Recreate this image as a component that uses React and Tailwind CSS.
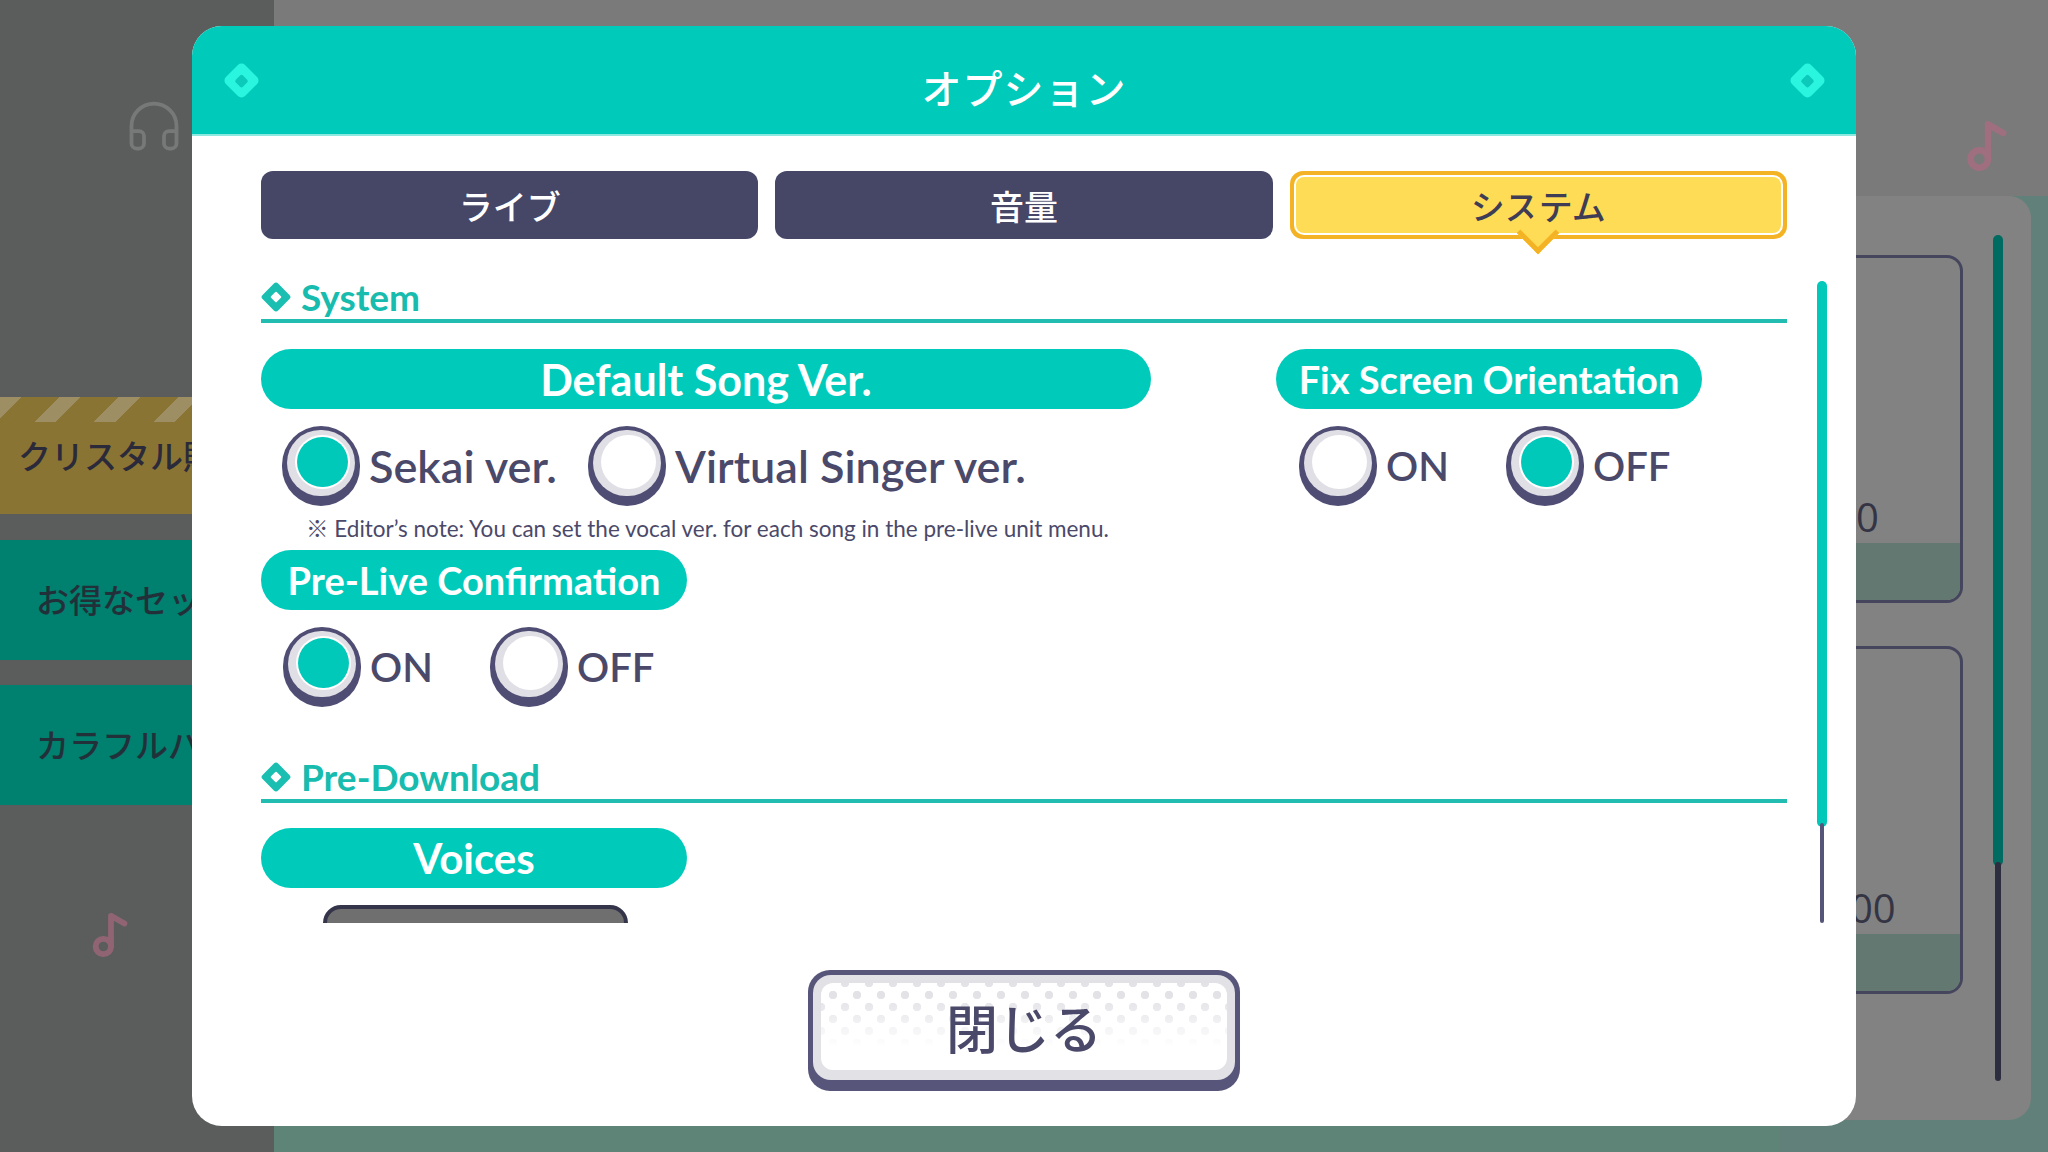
import React from 'react';
import { Music2, Headphones } from 'lucide-react';

const latin = "font-['Lato','Noto_Sans_CJK_JP',sans-serif]";
const jp = "font-['Noto_Sans_CJK_JP',sans-serif]";

const Radio = ({ on }) => (
    <div className="w-[78px] h-[80px] shrink-0 rounded-full bg-[#4f4d73] pt-[4px] px-[5px] pb-[10px]">
        <div className="w-full h-full rounded-full bg-[#dfdfe5] pt-[5px] pr-[5px] pb-[7px] pl-[8px]">
            {on ? (
                <div className="w-full h-full rounded-full bg-white p-[2px]">
                    <div className="w-full h-full rounded-full bg-[#00c9ba]" />
                </div>
            ) : (
                <div className="w-full h-full rounded-full bg-white" />
            )}
        </div>
    </div>
);

const RadioOption = ({ on, label, w = '', size = 'text-[40px]' }) => (
    <div className={`flex items-center gap-[9px] shrink-0 ${w}`}>
        <Radio on={on} />
        <span className={`${size} font-semibold leading-none text-[#4b4969] whitespace-nowrap`}>{label}</span>
    </div>
);

const Pill = ({ className = '', children }) => (
    <div className={`h-[60px] shrink-0 rounded-full bg-[#00cbbb] flex items-center justify-center text-white font-bold leading-none whitespace-nowrap ${className}`}>
        {children}
    </div>
);

const SectionHeader = ({ title }) => (
    <div className="h-[46px] flex items-center gap-[10px] border-b-4 border-[#22bdb0] pb-[2px]">
        <div className="w-[30px] h-[30px] flex items-center justify-center">
            <div className="w-[22px] h-[22px] rotate-45 rounded-[3px] bg-[#1bbfb1] flex items-center justify-center">
                <div className="w-[8px] h-[8px] bg-white rounded-[1px]" />
            </div>
        </div>
        <span className="text-[37px] font-bold leading-[40px] text-[#17bcae]">{title}</span>
    </div>
);

const HeaderDiamond = () => (
    <div className="w-[40px] h-[40px] flex items-center justify-center">
        <div className="w-[27px] h-[27px] rotate-45 rounded-[5px] bg-[#2af5df] flex items-center justify-center">
            <div className="w-[10px] h-[10px] rounded-[2px] bg-[#0bcab9]" />
        </div>
    </div>
);

const Tabs = () => (
    <div className={`grid grid-cols-3 gap-[17px] h-[68px] shrink-0 ${jp}`}>
        <div className="rounded-[12px] bg-[#464667] flex items-center justify-center text-white text-[34px] font-medium">ライブ</div>
        <div className="rounded-[12px] bg-[#464667] flex items-center justify-center text-white text-[34px] font-medium">音量</div>
        <div className="relative rounded-[13px] bg-[#f4b324] p-[4px]">
            <div className="h-full rounded-[10px] bg-white p-[2px]">
                <div className="h-full rounded-[8px] bg-[#ffdc55] flex items-center justify-center text-[#3f3d55] text-[34px] font-medium">システム</div>
            </div>
            <div className="absolute left-1/2 -translate-x-1/2 bottom-[-9px] w-[30px] h-[30px] rotate-45 bg-[#ffdc55] border-r-[5px] border-b-[5px] border-[#f4b324]" />
        </div>
    </div>
);

const CloseButton = () => (
    <div className="w-[432px] h-[121px] rounded-[22px] bg-[#57557a] pt-[5px] px-[5px] pb-[11px]">
        <div className="h-full rounded-[18px] bg-[#e1e1e6] pt-[8px] px-[8px] pb-[10px]">
            <div className="relative h-full rounded-[12px] bg-white overflow-hidden flex items-center justify-center">
                <div className="absolute inset-x-0 top-0 h-[64px] [background-image:radial-gradient(circle,#e2e2e7_4px,transparent_4.5px),radial-gradient(circle,#e2e2e7_4px,transparent_4.5px)] [background-size:24px_24px] [background-position:0_0,12px_12px] [mask-image:linear-gradient(to_bottom,#000_20%,transparent)]" />
                <span className={`relative text-[52px] font-medium leading-none text-[#4b4969] ${jp}`}>閉じる</span>
            </div>
        </div>
    </div>
);

const Content = () => (
    <div className={`w-[1526px] shrink-0 h-full overflow-hidden ${latin}`}>
        <div className="mt-[22px]">
            <SectionHeader title="System" />
        </div>
        <div className="mt-[26px] flex">
            <div className="w-[890px] shrink-0 flex flex-col">
                <Pill className="w-[890px] text-[43px]">Default Song Ver.</Pill>
                <div className="mt-[17px] flex pl-[21px]">
                    <RadioOption on label="Sekai ver." w="w-[306px]" size="text-[45px]" />
                    <RadioOption label="Virtual Singer ver." size="text-[45px]" />
                </div>
                <p className="mt-[10px] pl-[45px] text-[22.5px] leading-[26px] text-[#4b4969] whitespace-nowrap">
                    ※ Editor’s note: You can set the vocal ver. for each song in the pre-live unit menu.
                </p>
                <Pill className="mt-[8px] w-[426px] text-[38px]">Pre-Live Confirmation</Pill>
                <div className="mt-[17px] flex pl-[22px]">
                    <RadioOption on label="ON" w="w-[207px]" />
                    <RadioOption label="OFF" />
                </div>
            </div>
            <div className="ml-[125px] w-[426px] shrink-0 flex flex-col">
                <Pill className="w-[426px] text-[38px]">Fix Screen Orientation</Pill>
                <div className="mt-[17px] flex pl-[23px]">
                    <RadioOption label="ON" w="w-[207px]" />
                    <RadioOption on label="OFF" />
                </div>
            </div>
        </div>
        <div className="mt-[50px]">
            <SectionHeader title="Pre-Download" />
        </div>
        <Pill className="mt-[25px] w-[426px] text-[42px]">Voices</Pill>
        <div className="mt-[17px] ml-[62px] w-[305px] h-[90px] rounded-[18px] border-4 border-[#34344a] bg-[#6f6f6f]" />
    </div>
);

const Background = () => (
    <div className="absolute inset-0 flex">
        {/* left shop list */}
        <div className={`w-[274px] h-full bg-[#5b5d5d] pt-[397px] flex flex-col ${jp}`}>
            <div className="relative h-[117px] bg-[#8a7434] flex items-center pl-[18px] overflow-hidden">
                <div className="absolute inset-x-0 top-0 h-[25px] [background-image:repeating-linear-gradient(135deg,#9d8e63_0_15px,transparent_15px_42px)]" />
                <span className="relative text-[33px] font-medium text-[#2b2a3a] whitespace-nowrap">クリスタル販売</span>
            </div>
            <div className="mt-[26px] h-[120px] bg-[#00806f] flex items-center pl-[36px] overflow-hidden">
                <span className="text-[33px] font-medium text-[#22303a] whitespace-nowrap">お得なセット</span>
            </div>
            <div className="mt-[25px] h-[120px] bg-[#00806f] flex items-center pl-[36px] overflow-hidden">
                <span className="text-[33px] font-medium text-[#22303a] whitespace-nowrap">カラフルパス</span>
            </div>
        </div>

        {/* centre */}
        <div className="flex-1 h-full flex flex-col">
            <div className="flex-1 bg-[#7a7a7a]" />
            <div className="h-[26px] bg-[#5e8377]" />
        </div>

        {/* right panel */}
        <div className="w-[268px] h-full flex flex-col bg-[#62807a]">
            <div className="h-[196px] shrink-0 bg-[#7a7a7a]" />
            <div className="mr-[17px] h-[924px] rounded-r-[22px] bg-[#828282] flex">
                <div className="w-[183px] shrink-0 pt-[59px] flex flex-col gap-[43px]">
                    <div className="h-[348px] rounded-r-[16px] border-[3px] border-l-0 border-[#45455e] overflow-hidden flex flex-col justify-end">
                        <div className="pl-[76px] pb-[6px] text-[40px] leading-none text-[#343444] font-['Open_Sans',sans-serif]">0</div>
                        <div className="h-[57px] bg-[#647872]" />
                    </div>
                    <div className="h-[348px] rounded-r-[16px] border-[3px] border-l-0 border-[#45455e] overflow-hidden flex flex-col justify-end">
                        <div className="pl-[70px] pb-[6px] text-[40px] leading-none text-[#343444] font-['Open_Sans',sans-serif]">00</div>
                        <div className="h-[57px] bg-[#647872]" />
                    </div>
                </div>
                <div className="ml-[30px] pt-[39px] flex flex-col items-center">
                    <div className="w-[10px] h-[631px] rounded-full bg-[#006b61]" />
                    <div className="w-[6px] h-[219px] -mt-[4px] rounded-full bg-[#2d2d40]" />
                </div>
            </div>
        </div>

        {/* faint decorations */}
        <Music2 size={52} strokeWidth={3} className="absolute left-[1962px] top-[120px] text-[#b06a82] opacity-70" />
        <Music2 size={46} strokeWidth={3} className="absolute left-[88px] top-[912px] text-[#a8687e] opacity-70" />
        <Headphones size={60} strokeWidth={1.5} className="absolute left-[124px] top-[96px] text-[#8a8a8a] opacity-60" />
    </div>
);

export default function App() {
    return (
        <div className="relative w-[2048px] h-[1152px] overflow-hidden bg-[#7a7a7a]">
            <Background />

            {/* options dialog */}
            <div className="absolute left-[192px] top-[26px] w-[1664px] h-[1100px] rounded-[30px] bg-white flex flex-col overflow-hidden">
                <div className="h-[110px] shrink-0 bg-[#00cbbb] border-b-2 border-[#8de8df] grid grid-cols-[1fr_auto_1fr] items-center px-[29px]">
                    <div className="justify-self-start">
                        <HeaderDiamond />
                    </div>
                    <span className={`pt-[14px] text-[40px] font-medium leading-none tracking-[1px] text-white ${jp}`}>オプション</span>
                    <div className="justify-self-end">
                        <HeaderDiamond />
                    </div>
                </div>

                <div className="flex-1 flex flex-col px-[69px] pt-[35px] pb-[35px]">
                    <Tabs />
                    <div className="mt-[16px] h-[668px] shrink-0 flex">
                        <Content />
                        <div className="ml-[30px] shrink-0 w-[10px] pt-[26px] flex flex-col items-center">
                            <div className="w-[10px] h-[546px] shrink-0 rounded-full bg-[#00c9ba]" />
                            <div className="w-[4px] h-[100px] shrink-0 -mt-[4px] rounded-full bg-[#55557a]" />
                        </div>
                    </div>
                    <div className="mt-[47px] flex justify-center">
                        <CloseButton />
                    </div>
                </div>
            </div>
        </div>
    );
}
